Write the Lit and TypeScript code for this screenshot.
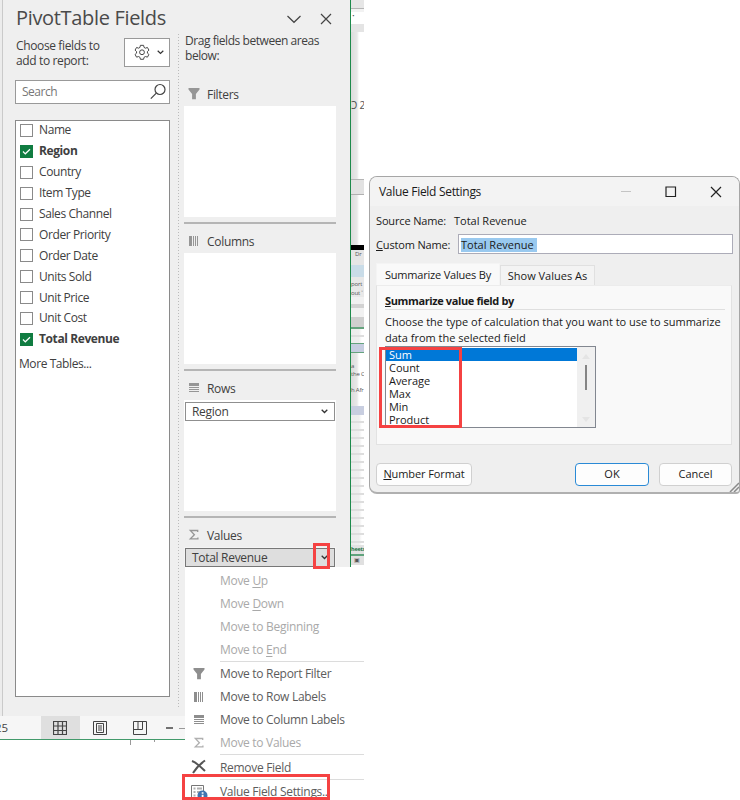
import { LitElement, html, css, svg, nothing } from "lit";
import { customElement, property } from "lit/decorators.js";
import { classMap } from "lit/directives/class-map.js";
import { styleMap } from "lit/directives/style-map.js";

const funnel = () => svg`<path d="M1.500 1h11v1.600L8.900 7v5.200H5.100V7L1.500 2.600z" fill="currentColor"/>`;
const columns = () => svg`<path d="M2 2h3v10H2zM6 2h1v10H6zM8 2h1v10H8zM10 2h1v10h-1z" fill="currentColor"/>`;
const rows = () => svg`<path d="M2 2h10v3H2zM2 6h10v1H2zM2 8h10v1H2zM2 10h10v1H2z" fill="currentColor"/>`;
const sigma = () => svg`<path d="M10.700 4V2.500H3.300L7.400 6.800l-4.100 4.100h7.600V9.400" fill="none" stroke="currentColor" stroke-width="1.300"/>`;
const remove = () => svg`<path d="M0 1c5 2 9 6 13 10M13 .5C8 4 4 8 1 13" fill="none" stroke="#555" stroke-width="2"/>`;
const settings = () => svg`<path d="M-.5.500h12v13h-12z" fill="#fff" stroke="#777"/><path d="M1.500 2.500h2v2h-2zM5 2.500h5v2H5zM1.500 6h2v2h-2zM1.500 9.500h2v2h-2zM5 6h4v2H5z" fill="#b0b0b0"/><circle cx="10.500" cy="10.500" r="5" fill="#3f74b0"/><path d="M9.700 9.800h1.800v4H9.700zM9.700 7.200h1.800v1.500H9.700z" fill="#fff"/>`;
const icons: Record<string, () => unknown> = { funnel, columns, rows, sigma, remove, settings };
const icon = (name: string) => html`<svg class="icon" width="14" height="14" viewBox="0 0 14 14">${icons[name]()}</svg>`;

/* Text with its keyboard accelerator marked by an underscore */
const accel = (text: string) => {
  const i = text.indexOf("_");
  return i < 0 ? text : html`${text.slice(0, i)}<u>${text[i + 1]}</u>${text.slice(i + 2)}`;
};

@customElement("field-list")
class FieldList extends LitElement {
  fields = ["Name", "*Region", "Country", "Item Type", "Sales Channel", "Order Priority", "Order Date", "Units Sold", "Unit Price", "Unit Cost", "*Total Revenue"];
  static styles = css`
    :host { display: block; box-sizing: border-box; height: 577px; border: 1px solid #8a8a8a; background: #fff; padding: 0 0 0 4px; }
    .row { display: flex; align-items: center; height: 20.9px; letter-spacing: -.4px; }
    .row:first-child { margin-top: -1px; }
    .label { margin-top: -1px; }
    .box { box-sizing: border-box; width: 13px; height: 13px; border: 1px solid #8a8a8a; margin-right: 6px; flex: none; }
    .on { font-weight: 700; letter-spacing: -.4px; }
    .on .box { background: #107c41; border-color: #107c41; }
    .box svg { display: block; }
    .more { margin: 5px 0 0 -1px; line-height: 17px; letter-spacing: -.42px; }
  `;
  render() {
    return html`${this.fields.map((f) => {
      const on = f[0] === "*";
      return html`<div class=${classMap({ row: true, on })}><span class="box">${on
        ? html`<svg width="11" height="11" viewBox="0 0 11 11"><path d="M2 5.500l2.300 2.300L9 3.200" fill="none" stroke="#fff" stroke-width="1.200"/></svg>` : nothing}</span><span class="label">${on ? f.slice(1) : f}</span></div>`;
    })}<div class="more">More Tables...</div>`;
  }
}

@customElement("drop-zone")
class DropZone extends LitElement {
  @property() label = "";
  @property() glyph = "";
  @property() value = "";
  @property({ type: Boolean, reflect: true }) pressed = false;
  static styles = css`
    :host { display: block; width: 152px; height: 147px; }
    .head { display: flex; align-items: center; height: 22.5px; padding-left: 3px; gap: 6px; letter-spacing: -.3px; }
    .icon { color: #969696; }
    .area { height: 111.500px; background: #fff; padding: 2px 1px 0; box-sizing: border-box; }
    .line { height: 2px; margin-top: 5px; background: #b5b5b5; }
    .pill { box-sizing: border-box; height: 19px; border: 1px solid #8f8f8f; display: flex; align-items: center; justify-content: space-between; padding: 0 6px; letter-spacing: -.3px; }
    :host([pressed]) .pill { background: #dedede; border-color: #777; }
    :host([pressed]) .area { padding-top: 1px; height: 20px; background: #f4f4f4; }
  `;
  render() {
    return html`<div class="head">${icon(this.glyph)}<span>${this.label}</span></div>
      <div class="area">${this.value ? html`<div class="pill"><span>${this.value}</span><svg width="7" height="5" viewBox="0 0 7 5"><path d="M.7.800l2.800 2.700L6.300.800" fill="none" stroke="#333" stroke-width="1.300"/></svg></div>` : nothing}</div>
      ${this.pressed ? nothing : html`<div class="line"></div>`}`;
  }
}

@customElement("pivot-pane")
class PivotPane extends LitElement {
  static styles = css`
    :host { display: flex; width: 350px; height: 716px; background: #efefef; border-right: 1px solid #1e8a4c; box-sizing: content-box; }
    .edge { width: 2px; border-right: 1px solid #cacaca; background: #ececec; height: 716px; }
    .left { width: 155px; padding-left: 12px; }
    h1 { margin: 0; font-size: 20px; font-weight: 400; line-height: 28px; height: 37px; padding: 4px 0 0 1px; box-sizing: border-box; color: #4a4a4a; white-space: nowrap; letter-spacing: -.33px; }
    .choose { display: flex; justify-content: space-between; height: 30px; margin-top: 1px; padding-left: 1px; line-height: 15px; letter-spacing: -.37px; }
    .gear { box-sizing: border-box; width: 46px; height: 29px; border: 1px solid #999; background: #fff; display: flex; align-items: center; padding: 0 5px 1px 9px; justify-content: space-between; }
    .search { box-sizing: border-box; height: 24px; margin: 12px 0 16px; border: 1px solid #999; background: #fff; display: flex; align-items: center; justify-content: space-between; padding: 0 2px 1px 6px; color: #777; letter-spacing: -.5px; }
    .dots { width: 1px; height: 674px; margin: 34px 5px 0 8px; background: repeating-linear-gradient(#bbb 0 1px, transparent 1px 3px); }
    .right { width: 166px; }
    .tools { display: flex; height: 33px; padding: 12px 17px 0 103px; box-sizing: border-box; justify-content: space-between; width: 165px; }
    .drag { line-height: 15px; height: 50px; padding-left: 1px; letter-spacing: -.45px; }
  `;
  render() {
    return html`<div class="edge"></div>
      <div class="left">
        <h1>PivotTable Fields</h1>
        <div class="choose"><span>Choose fields to<br>add to report:</span>
          <div class="gear"><svg width="16" height="16" viewBox="0 0 18 18" fill="none" stroke="#444" stroke-width="1.100"><path d="M7.200 1.500h3.600l.5 2.300 1.500.9 2.300-.8 1.700 3-1.700 1.600v1.800l1.700 1.500-1.700 3-2.300-.7-1.500.9-.5 2.200H7.200l-.5-2.200-1.500-.9-2.300.7-1.700-3 1.700-1.500V8.500L1.200 6.900l1.700-3 2.300.8 1.500-.9z" stroke-linejoin="round"/><circle cx="9" cy="9.300" r="2.700"/></svg><svg width="7" height="5" viewBox="0 0 7 5"><path d="M.7.800l2.800 2.700L6.300.800" fill="none" stroke="#333" stroke-width="1.200"/></svg></div>
        </div>
        <div class="search"><span>Search</span><svg width="17" height="17" viewBox="0 0 17 17" fill="none" stroke="#444" stroke-width="1.200"><circle cx="10" cy="6.500" r="5"/><path d="M6.300 10.200L.8 15.700"/></svg></div>
        <field-list></field-list>
      </div>
      <div class="dots"></div>
      <div class="right">
        <div class="tools"><svg width="14" height="14" viewBox="0 0 14 14"><path d="M.5 4l6.500 6.300L13.500 4" fill="none" stroke="#444" stroke-width="1.200"/></svg><svg width="12" height="14" viewBox="0 0 12 14"><path d="M1 2l10 10M11 2L1 12" fill="none" stroke="#444" stroke-width="1.200"/></svg></div>
        <div class="drag">Drag fields between areas<br>below:</div>
        <drop-zone label="Filters" glyph="funnel"></drop-zone>
        <drop-zone label="Columns" glyph="columns"></drop-zone>
        <drop-zone label="Rows" glyph="rows" value="Region"></drop-zone>
        <drop-zone label="Values" glyph="sigma" value="Total Revenue" pressed></drop-zone>
      </div>`;
  }
}

@customElement("sheet-sliver")
class SheetSliver extends LitElement {
  /* height, background and text of each band of the worksheet edge */
  bands: [number, string, string?][] = [
    [8, "#e6e6e6"], [1, "#b5b5b5"], [3, "#f2f2f2"], [12, "#fff", " •"], [8, "#e4e4e4"], [64, "edge"], [18, "edge", "Ɔ 2"],
    [65, "edge"], [1, "#b5b5b5"], [14, "#e2e2e2"], [1, "#b0b0b0"], [50, "edge"], [5, "#000"], [15, "#e6e6e6", "   Dr"], [12, "#c9dce8"], [3, "#e8e8e8"], [9, "#e8e8e8", "port"], [8, "#e8e8e8", "out ˅"],
    [7, "#f1f1f1"], [4, "#d2d2d2"], [9, "#f1f1f1"], [10, "#cfcfcf"], [2, "#65a37e"], [14, "rules"], [1, "#65a37e"], [8, "#c6cde0"], [1, "#65a37e"],
    [9, "edge"], [8, "edge", "a"], [8, "edge", "the C"], [8, "edge"], [9, "edge", "h Afr"], [11, "edge"], [9, "#c8cee0"], [130, "rules"], [9, "#e2e2e2", "heets"], [2, "#60a37c"], [9, "#e0e0e0", "  ▣"],
  ];
  static styles = css`
    :host { display: block; width: 13px; height: 568px; overflow: hidden; letter-spacing: -.2px; }
    .band { overflow: hidden; white-space: pre; color: #555; font-size: 6px; line-height: 9px; }
    .edge { background: linear-gradient(90deg, #dcdcdc, #e8e8e8 6px, #fff 8px); }
    .rules { background: linear-gradient(90deg, #dcdcdc88, #e0e0e088 8px, transparent 11px), repeating-linear-gradient(#fff 0 6px, #ddd 6px 8px); }
    .big { font-size: 10px; line-height: 18px; }
    .green { color: #237346; font-weight: 700; font-size: 5.500px; }
  `;
  render() {
    return this.bands.map(([h, bg, text]) => {
      const named = bg[0] !== "#";
      return html`<div class=${classMap({ band: true, edge: bg === "edge", rules: bg === "rules", big: h === 18, green: text === "heets" })}
        style=${styleMap({ height: `${h}px`, background: named ? undefined : bg })}>${text ?? nothing}</div>`;
    });
  }
}

@customElement("status-bar")
class StatusBar extends LitElement {
  static styles = css`
    :host { display: flex; box-sizing: border-box; width: 185px; height: 24px; background: #f6f6f6; border-bottom: 1px solid #429a6b; overflow: hidden; color: #444; }
    .count { width: 41px; line-height: 24px; text-indent: -5px; font-size: 11.500px; }
    .mode { width: 39px; display: flex; align-items: center; justify-content: center; box-sizing: border-box; }
    .active { background: #dfdfdf; padding-right: 1px; }
    .mode + .mode { width: 40px; }
    .zoom { margin: 11px 0 0 6px; }
  `;
  render() {
    return html`<span class="count">25</span>
      <span class="mode active"><svg width="14" height="14" viewBox="0 0 14 14" fill="none" stroke="#444"><path d="M.5.500h13v13H.5zM5 .5v13M9.500.500v13M.5 5h13M.5 9.500h13" stroke-width="1.200"/></svg></span>
      <span class="mode"><svg width="14" height="14" viewBox="0 0 14 14" fill="none" stroke="#444"><path d="M.5.500h13v13H.5zM3.500 2.500h7v9h-7zM5 5h4M5 7h4M5 9h4"/></svg></span>
      <span class="mode"><svg width="14" height="14" viewBox="0 0 14 14" fill="none" stroke="#444"><path d="M.5.500h13v13H.5zM.5 8.500h9v-8M5 .5v8"/></svg></span>
      <svg class="zoom" width="19" height="3" viewBox="0 0 19 3"><path d="M0 1h7" stroke="#444" stroke-width="1.500"/><path d="M13 1.500h6" stroke="#999"/></svg>`;
  }
}

@customElement("context-menu")
class ContextMenu extends LitElement {
  items: [string, string?, boolean?][] = [
    ["Move _Up", , true], ["Move _Down", , true], ["Move to Be_ginning", , true], ["Move to _End", , true], ["-"],
    ["Move to Report Filter", "funnel"], ["Move to Row Labels", "columns"], ["Move to Column Labels", "rows"], ["Move to Values", "sigma", true], ["-"],
    ["Remove Field", "remove"], ["-"], ["Value Field Settings..", "settings"],
  ];
  static styles = css`
    :host { display: block; width: 179px; height: 230px; overflow: hidden; background: #fff; padding-top: 1.500px; box-sizing: border-box; color: #5c5c5c; letter-spacing: -.3px; }
    .item { display: flex; align-items: center; height: 23px; white-space: nowrap; }
    .slot { width: 35px; padding-left: 7px; box-sizing: border-box; display: flex; color: #8e8e8e; }
    .off { color: #a9a9a9; }
    .off .slot { color: #b0b0b0; }
    .rule { height: 1px; background: #dcdcdc; margin: 0 0 .6px 35px; }
    .icon { overflow: visible; }
    u { text-underline-offset: 2px; }
  `;
  render() {
    return this.items.map(([text, glyph, off]) => text === "-" ? html`<div class="rule"></div>`
      : html`<div class=${classMap({ item: true, off: !!off })}><span class="slot">${glyph ? icon(glyph) : nothing}</span><span>${accel(text)}</span></div>`);
  }
}

@customElement("value-field-dialog")
class ValueFieldDialog extends LitElement {
  static styles = css`
    :host { display: block; box-sizing: border-box; width: 371px; height: 318px; border: 1px solid #a6a6a6; border-bottom: 2px solid #b0b0b0; border-radius: 8px 8px 4px 8px; background: #efefef; overflow: hidden; color: #1a1a1a; font-size: 11px; position: relative; padding: 0 6px; }
    .title { display: flex; align-items: center; height: 29px; background: #f3f3f3; margin: 0 -6px; padding: 0 17px 0 9px; font-size: 12px; letter-spacing: -.3px; }
    .title span { flex: 1; }
    .title svg { margin-left: 33px; }
    .line { display: flex; align-items: center; }
    .source { height: 20px; margin-top: 4px; }
    .source label { letter-spacing: -.15px; }
    .custom { height: 20px; margin-top: 4px; }
    .line label { width: 78px; }
    .custom label { width: 82px; letter-spacing: -.15px; }
    .input { box-sizing: border-box; width: 275px; height: 20px; border: 1px solid #acacb8; background: #fff; padding: 2px; }
    .sel { display: inline-block; height: 14px; line-height: 14px; background: #99c9ef; padding-right: 3px; }
    .tabs { display: flex; align-items: flex-end; height: 22px; margin-top: 9px; }
    .tab { box-sizing: border-box; height: 20px; line-height: 19px; border: 1px solid #e0e0e0; border-bottom: 0; background: #f3f3f3; width: 95px; text-align: center; white-space: nowrap; }
    .current { height: 22px; width: 124px; background: #f9f9f9; border-color: #f4f4f4; line-height: 22px; letter-spacing: -.2px; }
    .panel { box-sizing: border-box; width: 356px; height: 160px; background: #f9f9f9; border: 1px solid #e2e2e2; border-top-color: #ececec; padding: 6px 6px 0 8px; white-space: nowrap; }
    h2 { font-size: 11px; line-height: 17px; height: 17px; margin: 0 0 4px; border-bottom: 1px solid #dfdfdf; letter-spacing: -.38px; }
    p { margin: 0; line-height: 16px; }
    .list { box-sizing: border-box; display: flex; width: 211px; height: 82px; border: 1px solid #828790; background: #fff; overflow: hidden; }
    .options { flex: 1; padding-top: 1px; }
    .option { height: 13px; line-height: 13px; padding-left: 3px; letter-spacing: -.05px; }
    .chosen { background: #0078d7; color: #fff; }
    .scroll { width: 18px; background: #f0f0f0; display: flex; flex-direction: column; align-items: center; justify-content: space-between; padding: 7px 0 5px; box-sizing: border-box; }
    .thumb { width: 2px; height: 25px; background: #858585; margin-bottom: 21px; }
    .buttons { display: flex; margin-top: 18px; }
    .btn { box-sizing: border-box; height: 23px; border: 1px solid #d0d0d0; border-radius: 4px; background: #fdfdfd; line-height: 20px; text-align: center; width: 73px; }
    .format { width: 96px; margin-right: 103px; letter-spacing: -.1px; }
    .ok { border-color: #2a8ad6; margin-right: 10px; width: 74px; }
    .grip { position: absolute; right: 0; bottom: 0; }
    .mark { position: absolute; left: 9px; top: 170px; box-sizing: border-box; width: 83px; height: 81px; border: 3px solid #f54242; }
    u { text-underline-offset: 1px; }
  `;
  render() {
    return html`
      <div class="title"><span>Value Field Settings</span>
        <svg width="11" height="11"><path d="M0 5.500h10" stroke="#c4c4c4"/></svg>
        <svg width="12" height="12"><path d="M1 1h9.500v9.500H1z" fill="none" stroke="#222" stroke-width="1.200"/></svg>
        <svg width="12" height="12"><path d="M1 1l10 10M11 1L1 11" stroke="#222" stroke-width="1.200"/></svg></div>
      <div class="line source"><label>Source Name:</label><span>Total Revenue</span></div>
      <div class="line custom"><label>${accel("_Custom Name:")}</label><div class="input"><span class="sel">Total Revenue</span></div></div>
      <div class="tabs"><div class="tab current">Summarize Values By</div><div class="tab">Show Values As</div></div>
      <div class="panel">
        <h2>${accel("_Summarize value field by")}</h2>
        <p>Choose the type of calculation that you want to use to summarize<br>data from the selected field</p>
        <div class="list"><div class="options">${["Sum", "Count", "Average", "Max", "Min", "Product"].map((o, i) => html`<div class=${classMap({ option: true, chosen: i === 0 })}>${o}</div>`)}</div>
          <div class="scroll"><svg width="8" height="5"><path d="M0 5l4-5 4 5z" fill="#e4e4e4"/></svg><div class="thumb"></div><svg width="8" height="5"><path d="M0 0l4 5 4-5z" fill="#e4e4e4"/></svg></div></div>
      </div>
      <div class="buttons"><div class="btn format">${accel("_Number Format")}</div><div class="btn ok">OK</div><div class="btn">Cancel</div></div>
      <div class="mark"></div>
      <svg class="grip" width="10" height="10"><path d="M1 10l9-9M5 10l5-5" stroke="#8a8a8a" stroke-width="1.500"/></svg>`;
  }
}

@customElement("app-root")
class AppRoot extends LitElement {
  static styles = css`
    :host { display: block; position: relative; width: 740px; height: 800px; overflow: hidden; background: #fff; color: #404040; font: 12px "Open Sans", "Noto Sans", sans-serif; }
    .top { display: flex; align-items: flex-start; }
    .menu { position: absolute; left: 185px; top: 567px; }
    .cover { position: absolute; left: 185px; top: 567px; width: 200px; height: 233px; background: #fff; }
    .dialog { position: absolute; left: 369px; top: 176px; }
    .mark { position: absolute; box-sizing: border-box; border: 3px solid #f54242; }
    .arrow { left: 313px; top: 543px; width: 17px; height: 26px; }
    .settings { left: 182px; top: 774px; width: 148px; height: 26px; }
    .ticks { display: block; margin-left: 130px; }
  `;
  render() {
    return html`<div class="top"><pivot-pane></pivot-pane><sheet-sliver></sheet-sliver></div>
      <status-bar></status-bar>
      <svg class="ticks" width="26" height="5"><path d="M.5 0v5M24.500 0v2" stroke="#999"/></svg>
      <div class="cover"></div>
      <context-menu class="menu"></context-menu>
      <value-field-dialog class="dialog"></value-field-dialog>
      <div class="mark arrow"></div><div class="mark settings"></div>`;
  }
}
